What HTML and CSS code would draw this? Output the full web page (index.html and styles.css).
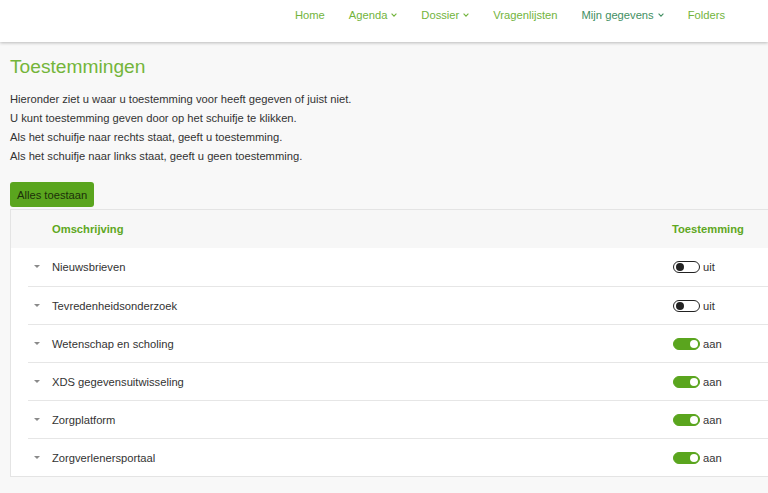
FILE: index.html
```
<!DOCTYPE html>
<html lang="nl">
<head>
    <meta charset="UTF-8">
    <meta name="viewport" content="width=device-width, initial-scale=1.0">
    <title>Toestemmingen</title>
    <link rel="stylesheet" href="styles.css">
</head>
<body>
    <header class="topbar">
        <nav class="nav">
            <a href="#" class="nav-item">Home</a>
            <a href="#" class="nav-item">Agenda <svg class="chev" viewBox="0 0 6 4"><path d="M0.6 0.7 L3 3.1 L5.4 0.7"/></svg></a>
            <a href="#" class="nav-item">Dossier <svg class="chev" viewBox="0 0 6 4"><path d="M0.6 0.7 L3 3.1 L5.4 0.7"/></svg></a>
            <a href="#" class="nav-item">Vragenlijsten</a>
            <a href="#" class="nav-item active">Mijn gegevens <svg class="chev" viewBox="0 0 6 4"><path d="M0.6 0.7 L3 3.1 L5.4 0.7"/></svg></a>
            <a href="#" class="nav-item">Folders</a>
        </nav>
    </header>

    <main class="content">
        <h1>Toestemmingen</h1>
        <div class="intro">
            <p>Hieronder ziet u waar u toestemming voor heeft gegeven of juist niet.</p>
            <p>U kunt toestemming geven door op het schuifje te klikken.</p>
            <p>Als het schuifje naar rechts staat, geeft u toestemming.</p>
            <p>Als het schuifje naar links staat, geeft u geen toestemming.</p>
        </div>

        <button class="btn-allow" id="allow-all">Alles toestaan</button>

        <div class="consent-card">
            <div class="consent-head">
                <span class="col-desc">Omschrijving</span>
                <span class="col-state">Toestemming</span>
            </div>
            <div id="consent-list"></div>
        </div>
    </main>

    <script>
        const items = [
            { name: 'Nieuwsbrieven', on: false },
            { name: 'Tevredenheidsonderzoek', on: false },
            { name: 'Wetenschap en scholing', on: true },
            { name: 'XDS gegevensuitwisseling', on: true },
            { name: 'Zorgplatform', on: true },
            { name: 'Zorgverlenersportaal', on: true }
        ];

        const list = document.getElementById('consent-list');

        function render() {
            list.innerHTML = '';
            items.forEach(function (item, i) {
                const row = document.createElement('div');
                row.className = 'consent-row';
                row.innerHTML = `
                    <span class="caret"></span>
                    <span class="col-desc">${item.name}</span>
                    <span class="col-state">
                        <span class="switch ${item.on ? 'on' : ''}"><span class="knob"></span></span>
                        <span class="state-label">${item.on ? 'aan' : 'uit'}</span>
                    </span>
                `;
                row.querySelector('.switch').addEventListener('click', function () {
                    items[i].on = !items[i].on;
                    render();
                });
                list.appendChild(row);
            });
        }

        document.getElementById('allow-all').addEventListener('click', function () {
            items.forEach(function (item) { item.on = true; });
            render();
        });

        render();
    </script>
</body>
</html>
```

FILE: styles.css
```
body {
    font-family: "Liberation Sans", Arial, sans-serif;
    font-size: 11.2px;
    margin: 0;
    padding: 0;
    background-color: #f8f8f8;
    color: #333;
}
.topbar {
    background: #fff;
    height: 42px;
    box-shadow: 0 1px 3px rgba(0, 0, 0, 0.25);
    position: relative;
}
.nav {
    display: flex;
    justify-content: flex-end;
    padding-right: 31px;
    height: 30px;
    align-items: center;
}
.nav-item {
    color: #72b43c;
    text-decoration: none;
    padding: 0 12px;
    display: flex;
    align-items: center;
    gap: 4px;
}
.nav-item.active {
    color: #428f62;
}
.chev {
    width: 6px;
    height: 4px;
    fill: none;
    stroke: currentColor;
    stroke-width: 1.1;
}
.content {
    padding: 14px 0 0 10px;
}
h1 {
    font-size: 19.2px;
    font-weight: normal;
    color: #74b53a;
    margin: 0 0 12px;
    line-height: 22px;
}
.intro p {
    margin: 0;
    line-height: 19px;
}
.intro {
    margin-bottom: 16px;
}
.btn-allow {
    font-family: inherit;
    font-size: 11.2px;
    background: #5aa51e;
    color: #1c3009;
    border: none;
    border-radius: 3px;
    padding: 0 7px;
    height: 25px;
    cursor: pointer;
    display: block;
}
.consent-card {
    margin-top: 2px;
    border: 1px solid #e4e4e4;
    border-right: none;
    background: #fff;
}
.consent-head {
    display: flex;
    align-items: center;
    height: 38px;
    background: #f7f7f7;
    font-weight: bold;
    color: #5ea722;
    padding-left: 41px;
}
.col-desc {
    width: 620px;
}
.col-state {
    display: flex;
    align-items: center;
}
.consent-row {
    display: flex;
    align-items: center;
    height: 37px;
    margin-left: 17px;
    padding-left: 24px;
    border-top: 1px solid #e6e6e6;
    position: relative;
}
.consent-row:first-child {
    border-top: none;
    height: 38px;
}
.caret {
    position: absolute;
    left: 6px;
    top: 50%;
    margin-top: -2px;
    border-left: 3px solid transparent;
    border-right: 3px solid transparent;
    border-top: 3px solid #8a8a8a;
}
.consent-row .col-desc {
    color: #333;
}
.switch {
    width: 25px;
    height: 10px;
    border: 1.5px solid #222;
    border-radius: 7px;
    background: #fff;
    position: relative;
    cursor: pointer;
    margin-left: 1px;
}
.switch .knob {
    position: absolute;
    left: 1.5px;
    top: 1px;
    width: 8px;
    height: 8px;
    border-radius: 50%;
    background: #222;
}
.switch.on {
    background: #5aa51e;
    border-color: #5aa51e;
}
.switch.on .knob {
    left: auto;
    right: 1.5px;
    background: #fff;
}
.state-label {
    margin-left: 3px;
    color: #333;
}
```
